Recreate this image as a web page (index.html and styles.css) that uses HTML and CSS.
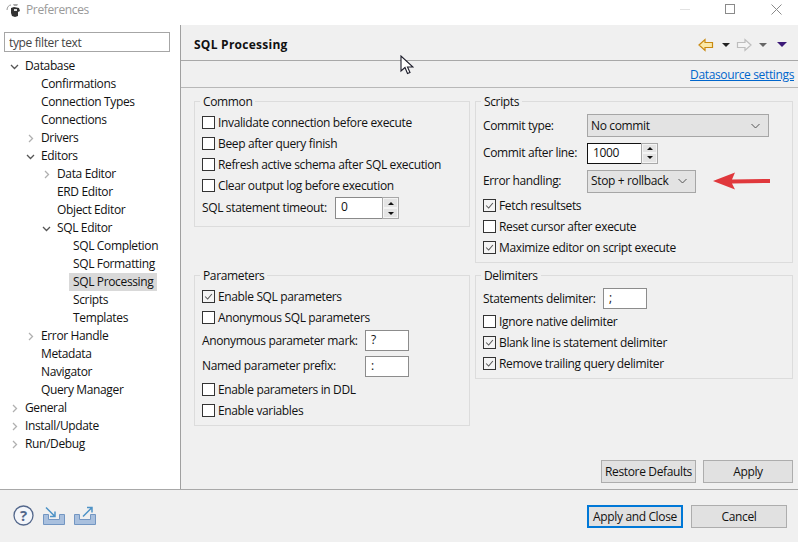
FILE: index.html
```html
<!DOCTYPE html>
<html lang="en">
<head>
<meta charset="utf-8">
<title>Preferences</title>
<link rel="stylesheet" href="styles.css">
</head>
<body>
<div class="window">
  <header class="titlebar">
    <svg class="app-icon" width="15" height="15" viewBox="0 0 15 15"><path d="M1 7C1 4 3 2 5 2" fill="none" stroke="#999" stroke-width="1"/><path d="M7 1h5l-1 2H8z" fill="#aaa"/><path d="M5 5l3-1 5 1 1 3-2 1 0 4-3 1-3-1-1-3z" fill="#333"/><path d="M8 6h3v2H8z" fill="#ddd"/></svg>
    <span class="title">Preferences</span>
    <span class="win-controls">
      <span class="win-min"></span>
      <span class="win-max"></span>
      <svg class="win-close" width="11" height="11" viewBox="0 0 11 11"><path d="M.5.5l10 10M10.500.5l-10 10" stroke="#8a8a8a" fill="none"/></svg>
    </span>
  </header>
  <div class="main">
    <aside class="sidebar">
      <input class="filter" type="text" value="type filter text">
      <ul class="tree">
        <li class="l0"><svg class="tw" viewBox="0 0 9 9"><path d="M1 3l3.500 3.500L8 3" class="open"/></svg>Database</li>
        <li class="l1">Confirmations</li>
        <li class="l1">Connection Types</li>
        <li class="l1">Connections</li>
        <li class="l1 has"><svg class="tw" viewBox="0 0 9 9"><path d="M3 1l3.500 3.500L3 8" class="shut"/></svg>Drivers</li>
        <li class="l1 has"><svg class="tw" viewBox="0 0 9 9"><path d="M1 3l3.500 3.500L8 3" class="open"/></svg>Editors</li>
        <li class="l2 has"><svg class="tw" viewBox="0 0 9 9"><path d="M3 1l3.500 3.500L3 8" class="shut"/></svg>Data Editor</li>
        <li class="l2">ERD Editor</li>
        <li class="l2">Object Editor</li>
        <li class="l2 has"><svg class="tw" viewBox="0 0 9 9"><path d="M1 3l3.500 3.500L8 3" class="open"/></svg>SQL Editor</li>
        <li class="l3">SQL Completion</li>
        <li class="l3">SQL Formatting</li>
        <li class="l3"><span class="selected">SQL Processing</span></li>
        <li class="l3">Scripts</li>
        <li class="l3">Templates</li>
        <li class="l1 has"><svg class="tw" viewBox="0 0 9 9"><path d="M3 1l3.500 3.500L3 8" class="shut"/></svg>Error Handle</li>
        <li class="l1">Metadata</li>
        <li class="l1">Navigator</li>
        <li class="l1">Query Manager</li>
        <li class="l0"><svg class="tw" viewBox="0 0 9 9"><path d="M3 1l3.500 3.500L3 8" class="shut"/></svg>General</li>
        <li class="l0"><svg class="tw" viewBox="0 0 9 9"><path d="M3 1l3.500 3.500L3 8" class="shut"/></svg>Install/Update</li>
        <li class="l0"><svg class="tw" viewBox="0 0 9 9"><path d="M3 1l3.500 3.500L3 8" class="shut"/></svg>Run/Debug</li>
      </ul>
    </aside>
    <section class="content">
      <div class="page-head">
        <h1>SQL Processing</h1>
        <div class="nav-tools">
          <svg class="nav-arrow" width="16" height="14" viewBox="0 0 16 14"><path d="M1 7l6-5.500V4.500h7.500v5H7v3z" fill="#fbe9a8" stroke="#c98a12" stroke-width="1.200"/></svg>
          <span class="tri tri-dark"></span>
          <svg class="nav-arrow fwd" width="16" height="14" viewBox="0 0 16 14"><path d="M15 7L9 1.500V4.500H1.500v5H9v3z" fill="#f4f4f4" stroke="#bdbdbd" stroke-width="1.200"/></svg>
          <span class="tri tri-grey"></span>
          <span class="tri tri-purple"></span>
        </div>
      </div>
      <div class="link-row"><a class="link" href="#">Datasource settings</a></div>
      <div class="panes">
        <div class="col col-left">
          <fieldset class="group g-common">
            <legend>Common</legend>
            <label class="check"><span class="box"></span>Invalidate connection before execute</label>
            <label class="check"><span class="box"></span>Beep after query finish</label>
            <label class="check"><span class="box"></span>Refresh active schema after SQL execution</label>
            <label class="check"><span class="box"></span>Clear output log before execution</label>
            <div class="field f-timeout">
              <span class="lbl lbl-timeout">SQL statement timeout:</span>
              <span class="spinner s-timeout"><span class="spin-val">0</span><span class="spin-btns"><span class="up"></span><span class="down"></span></span></span>
            </div>
          </fieldset>
          <fieldset class="group g-params">
            <legend>Parameters</legend>
            <label class="check"><span class="box on"><svg viewBox="0 0 13 13"><path d="M2.500 6.500l3 3 5-6" /></svg></span>Enable SQL parameters</label>
            <label class="check"><span class="box"></span>Anonymous SQL parameters</label>
            <div class="field f-param"><span class="lbl lbl-param">Anonymous parameter mark:</span><span class="textbox tb-param">?</span></div>
            <div class="field f-param"><span class="lbl lbl-param">Named parameter prefix:</span><span class="textbox tb-param">:</span></div>
            <label class="check"><span class="box"></span>Enable parameters in DDL</label>
            <label class="check"><span class="box"></span>Enable variables</label>
          </fieldset>
        </div>
        <div class="col col-right">
          <fieldset class="group g-scripts">
            <legend>Scripts</legend>
            <div class="field f-script"><span class="lbl lbl-script">Commit type:</span><span class="combo c-commit">No commit<svg class="chev" width="9" height="6" viewBox="0 0 9 6"><path d="M.5 1l4 4 4-4"/></svg></span></div>
            <div class="field f-script f-line"><span class="lbl lbl-script">Commit after line:</span><span class="spinner s-line"><span class="spin-val">1000</span><span class="spin-btns"><span class="up"></span><span class="down"></span></span></span></div>
            <div class="field f-script f-err"><span class="lbl lbl-script">Error handling:</span><span class="combo c-err">Stop + rollback<svg class="chev" width="9" height="6" viewBox="0 0 9 6"><path d="M.5 1l4 4 4-4"/></svg></span>
              <svg class="red-arrow" width="58" height="18" viewBox="0 0 58 18"><path d="M0 9L22 .5 19 7.500 57 7v4l-38 .5 3 6z" fill="#e0383c"/></svg>
            </div>
            <label class="check"><span class="box on"><svg viewBox="0 0 13 13"><path d="M2.500 6.500l3 3 5-6" /></svg></span>Fetch resultsets</label>
            <label class="check"><span class="box"></span>Reset cursor after execute</label>
            <label class="check"><span class="box on"><svg viewBox="0 0 13 13"><path d="M2.500 6.500l3 3 5-6" /></svg></span>Maximize editor on script execute</label>
          </fieldset>
          <fieldset class="group g-delims">
            <legend>Delimiters</legend>
            <div class="field f-delim"><span class="lbl lbl-delim">Statements delimiter:</span><span class="textbox tb-delim">;</span></div>
            <label class="check"><span class="box"></span>Ignore native delimiter</label>
            <label class="check"><span class="box on"><svg viewBox="0 0 13 13"><path d="M2.500 6.500l3 3 5-6" /></svg></span>Blank line is statement delimiter</label>
            <label class="check"><span class="box on"><svg viewBox="0 0 13 13"><path d="M2.500 6.500l3 3 5-6" /></svg></span>Remove trailing query delimiter</label>
          </fieldset>
        </div>
      </div>
      <div class="page-actions">
        <button class="btn btn-restore" type="button">Restore Defaults</button>
        <button class="btn btn-apply" type="button">Apply</button>
      </div>
    </section>
  </div>
  <footer class="footer">
    <div class="foot-icons">
      <svg width="21" height="21" viewBox="0 0 21 21"><circle cx="10.500" cy="10.500" r="9.500" fill="#f4f6fa" stroke="#54688c" stroke-width="1.300"/><text class="help-q" x="10.500" y="16" text-anchor="middle">?</text></svg>
      <svg class="io" width="22" height="20" viewBox="0 0 22 20"><path d="M.5 8.500h5v5h11v-5h5v10H.5z" fill="#a9c0de" stroke="#7396c2"/><path d="M3 1.500l9 9M12 5.500v5H7" fill="none" stroke="#4f93c6" stroke-width="1.500"/></svg>
      <svg class="io" width="22" height="20" viewBox="0 0 22 20"><path d="M.5 8.500h5v5h11v-5h5v10H.5z" fill="#a9c0de" stroke="#7396c2"/><path d="M9 10.500l9-9M13 1.500h5v5" fill="none" stroke="#4f93c6" stroke-width="1.500"/></svg>
    </div>
    <div class="foot-actions">
      <button class="btn btn-primary" type="button">Apply and Close</button>
      <button class="btn btn-cancel" type="button">Cancel</button>
    </div>
  </footer>
  <svg class="cursor" width="14" height="20" viewBox="0 0 14 20"><path d="M1 1v15l4-3.500 2.500 6 2.500-1-2.500-5.500H13z" fill="#fff" stroke="#1c1c2a" stroke-width="1.100"/></svg>
</div>
</body>
</html>
```
FILE: styles.css
```css
* { box-sizing: border-box; }
html, body { margin: 0; padding: 0; }
body { font: 12px/18px "Open Sans", "Noto Sans", sans-serif; letter-spacing: -0.36px; color: #111; background: #fff; }
.window { position: relative; width: 798px; height: 542px; overflow: hidden; display: flex; flex-direction: column; }

.titlebar { height: 25px; flex: none; display: flex; align-items: flex-start; padding: 2px 0 0 6px; background: #fff; }
.app-icon { margin-top: 1px; }
.title { margin-left: 5px; color: #9a9a9a; line-height: 16px; }
.win-controls { margin-left: auto; display: flex; align-items: flex-start; padding-right: 16px; }
.win-min { width: 10px; height: 1px; margin-top: 7px; background: #e2e2e2; }
.win-max { width: 10px; height: 10px; margin: 2px 0 0 35px; border: 1px solid #8a8a8a; }
.win-close { margin: 2px 0 0 36px; }

.main { display: flex; height: 464px; flex: none; }
.sidebar { width: 181px; flex: none; background: #fff; border-right: 1px solid #a0a0a0; padding: 7px 0 0 4px; }
.filter { display: block; width: 166px; height: 20px; border: 1px solid #a6a6a6; padding: 0 4px; font: inherit; letter-spacing: inherit; color: #444; background: #fff; outline: none; }
.tree { list-style: none; margin: 5px 0 0; padding: 0; }
.tree li { height: 18px; display: flex; align-items: center; white-space: nowrap; }
.l0 { padding-left: 21px; }
.l1 { padding-left: 37px; }
.l2 { padding-left: 53px; }
.l3 { padding-left: 69px; }
.tw { width: 9px; height: 9px; flex: none; margin-left: -15px; margin-right: 6px; fill: none; }
.open { stroke: #555; stroke-width: 1.300; }
.shut { stroke: #b0b0b0; stroke-width: 1.300; }
.selected { margin-left: -4px; padding: 0 4px; background: #d9d9d9; height: 18px; line-height: 18px; }

.content { flex: 1; min-width: 0; background: #f0f0f0; display: flex; flex-direction: column; }
.page-head { height: 36px; flex: none; border-bottom: 1px solid #a8a8a8; display: flex; align-items: center; justify-content: space-between; padding: 4px 11px 0 13px; }
.page-head h1 { margin: 0; font-size: 12px; font-weight: 700; letter-spacing: 0.26px; }
.nav-tools { display: flex; align-items: center; }
.fwd { margin-left: 6px; }
.tri { width: 0; height: 0; margin-left: 8px; border-style: solid; border-width: 4px 4px 0; border-color: #222 transparent transparent; }
.tri-grey { margin-left: 7px; border-top-color: #666; }
.tri-purple { margin-left: 10px; border-width: 5px 5px 0; border-top-color: #3c1a78; }
.link-row { height: 27px; flex: none; border-bottom: 1px solid #b8b8b8; display: flex; justify-content: flex-end; align-items: center; padding: 1px 4px 0 0; }
.link { color: #0066cc; text-decoration: underline; }

.panes { flex: 1; display: flex; gap: 5px; padding: 4px 5px 0 13px; }
.col { display: flex; flex-direction: column; }
.col-left { width: 276px; gap: 39px; }
.col-right { width: 318px; gap: 3px; }
.group { margin: 0; min-width: 0; border: 1px solid #dcdcdc; padding: 2px 0 0 7px; }
.group legend { margin-left: -2px; padding: 0 3px; line-height: 20px; height: 18px; }
.g-common { height: 135px; }
.g-params { height: 160px; }
.g-scripts { height: 171px; }
.g-delims { height: 113px; }

.check { display: flex; align-items: center; height: 21px; white-space: nowrap; }
.box { width: 13px; height: 13px; flex: none; margin-right: 3px; border: 1px solid #333; background: #fff; display: flex; }
.box.on { border-color: #333; background: #f4f4f4; }
.box svg { width: 11px; height: 11px; fill: none; stroke: #555; stroke-width: 1.200; }

.field { display: flex; align-items: center; white-space: nowrap; }
.f-timeout { height: 24px; }
.lbl-timeout { width: 133px; }
.f-param { height: 25px; }
.f-param + .f-param { height: 26px; }
.lbl-param { width: 163px; }
.f-script { height: 27px; }
.f-line, .f-err { height: 28px; }
.lbl-script { width: 104px; }
.f-delim { height: 25px; }
.lbl-delim { width: 120px; }

.spinner { display: inline-flex; height: 22px; background: #fff; }
.s-timeout { width: 64px; }
.s-line { width: 71px; height: 21px; }
.spin-val { flex: 1; border: 1px solid #8a8a8a; border-right: 0; padding-left: 5px; line-height: 18px; background: #fff; }
.s-line .spin-val { border-color: #111; }
.spin-btns { width: 17px; display: flex; flex-direction: column; border: 1px solid #a8a8a8; background: #f0f0f0; }
.up, .down { flex: 1; display: flex; align-items: center; justify-content: center; background: #e4e4e4; border: 1px solid #f4f4f4; }
.up::after { content: ""; border-style: solid; border-width: 0 3px 3px; border-color: transparent transparent #111; }
.down::after { content: ""; border-style: solid; border-width: 3px 3px 0; border-color: #111 transparent transparent; }

.textbox { width: 44px; height: 21px; border: 1px solid #8c8c8c; background: #fff; padding-left: 5px; line-height: 18px; }
.combo { display: flex; align-items: center; justify-content: space-between; height: 23px; border: 1px solid #a6a6a6; background: #e3e3e3; padding: 0 8px 0 3px; }
.c-commit { width: 182px; }
.c-err { width: 109px; }
.chev { fill: none; stroke: #555; stroke-width: 1; }
.red-arrow { margin-left: 17px; }

.page-actions { display: flex; justify-content: flex-end; gap: 7px; padding: 0 5px 6px 0; }
.btn { font: inherit; letter-spacing: inherit; color: #111; height: 23px; padding: 0; border: 1px solid #adadad; background: #e1e1e1; }
.btn-restore { width: 95px; }
.btn-apply { width: 90px; }

.footer { flex: 1; background: #f0f0f0; border-top: 1px solid #a8a8a8; display: flex; justify-content: space-between; padding: 15px 11px 0 13px; }
.foot-icons { display: flex; gap: 9px; height: 22px; }
.io { margin-top: 1px; }
.help-q { font: 700 15px "Open Sans", sans-serif; fill: #54688c; }
.foot-actions { display: flex; gap: 8px; }
.btn-primary { width: 96px; border: 2px solid #0078d7; }
.btn-cancel { width: 96px; }
.cursor { position: absolute; left: 400px; top: 55px; }
```
